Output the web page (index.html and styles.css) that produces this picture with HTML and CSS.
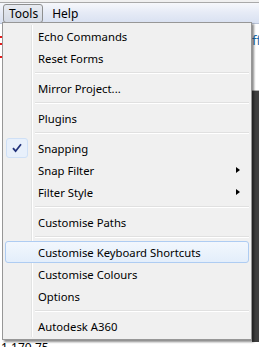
FILE: index.html
```html
<!DOCTYPE html>
<html lang="en">
<head>
    <meta charset="UTF-8">
    <title>Tools menu</title>
    <link rel="stylesheet" href="styles.css">
</head>
<body>

<div class="menubar">
    <span class="menu-title open">Tools</span>
    <span class="menu-title">Help</span>
</div>

<div class="workspace">
    <div class="canvas">
        <div class="marks"></div>
    </div>
    <div class="side">
        <div class="side-top">ff</div>
        <div class="side-dark"></div>
    </div>
</div>
<div class="status">1,170.75</div>

<!-- menu opened from "Tools" -->
<div class="dropdown">
    <div class="item">Echo Commands</div>
    <div class="item">Reset Forms</div>
    <div class="sep"></div>
    <div class="item">Mirror Project...</div>
    <div class="sep"></div>
    <div class="item">Plugins</div>
    <div class="sep"></div>
    <div class="item checked">
        <span class="check">
            <svg width="10" height="10" viewBox="0 0 10 10"><path d="M1 5.2 L3.6 8.2 L9 1.2" fill="none" stroke="#21317a" stroke-width="1.8"/></svg>
        </span>
        Snapping
    </div>
    <div class="item sub">Snap Filter</div>
    <div class="item sub">Filter Style</div>
    <div class="sep"></div>
    <div class="item">Customise Paths</div>
    <div class="sep"></div>
    <div class="item hover">Customise Keyboard Shortcuts</div>
    <div class="item">Customise Colours</div>
    <div class="item">Options</div>
    <div class="sep"></div>
    <div class="item">Autodesk A360</div>
</div>

</body>
</html>
```

FILE: styles.css
```css
body {
    margin: 0;
    width: 259px;
    height: 347px;
    overflow: hidden;
    position: relative;
    font-family: "Noto Sans", "Open Sans", sans-serif;
    font-size: 11.3px;
    color: #000;
    background: #fff;
}
.menubar {
    height: 19px;
    padding-top: 2px;
    border-top: 2px solid #f0f0f0;
    box-shadow: inset 0 1px 0 #a9a9a9;
    background: linear-gradient(#f8f9fc, #e6ebf6 50%, #d9e1f1);
    border-bottom: 1px solid #b9c3d6;
    display: flex;
    align-items: stretch;
    padding-left: 3px;
    gap: 2px;
}
.menu-title {
    padding: 0 6px 0 6px;
    line-height: 17px;
    font-size: 12px;
    border: 1px solid transparent;
}
.menu-title.open {
    border-color: #8e8f8f;
    border-radius: 3px;
    background: linear-gradient(#e8ebf1, #d3d9e4);
    padding: 0 4px 0 5px;
}
.workspace {
    display: flex;
    height: 318px;
}
.canvas {
    flex: 1;
    background: #fff;
}
.marks {
    width: 2px;
    height: 316px;
    background: linear-gradient(transparent 12px, #e31b1b 12px, #e31b1b 14px, transparent 14px, transparent 19px, #e31b1b 19px, #e31b1b 21px, transparent 21px, transparent 32px, #e31b1b 32px, #e31b1b 34px, transparent 34px);
}
.side {
    width: 7px;
    display: flex;
    flex-direction: column;
}
.side-top {
    height: 66px;
    background: #fff;
    color: #1a6fb0;
    font-size: 13px;
    line-height: 32px;
    border-bottom: 1px solid #b0b0b0;
    overflow: hidden;
}
.side-dark {
    flex: 1;
    background: #3f3f3f;
}
.status {
    font-size: 12px;
    line-height: 12px;
    padding-left: 1px;
}
.dropdown {
    position: absolute;
    left: 2px;
    top: 22px;
    width: 244px;
    padding: 2px;
    background: #f0f0f0;
    border: 1px solid #979797;
    box-shadow: 2px 2px 2px rgba(0, 0, 0, 0.45);
}
.dropdown::before {
    content: "";
    position: absolute;
    left: 28px;
    top: 2px;
    bottom: 2px;
    width: 1px;
    background: #e2e3e3;
    border-right: 1px solid #fff;
}
.item {
    height: 22px;
    line-height: 21px;
    padding-left: 32px;
    position: relative;
    border: 1px solid transparent;
    box-sizing: border-box;
    border-radius: 3px;
}
.item.hover {
    border-color: #aeccf2;
    background: linear-gradient(#f2f7fd, #e3eefb);
}
.item.sub::after {
    content: "";
    position: absolute;
    right: 8px;
    top: 7px;
    border-left: 4px solid #000;
    border-top: 3.5px solid transparent;
    border-bottom: 3.5px solid transparent;
}
.check {
    position: absolute;
    left: 0;
    top: 0;
    width: 22px;
    height: 20px;
    box-sizing: border-box;
    border: 1px solid #cfe0f6;
    border-radius: 3px;
    background: #e8f0fb;
    display: flex;
    align-items: center;
    justify-content: center;
}
.sep {
    height: 1px;
    margin: 3px 0 3px 30px;
    background: #e0e0e0;
    border-bottom: 1px solid #fff;
}
```
